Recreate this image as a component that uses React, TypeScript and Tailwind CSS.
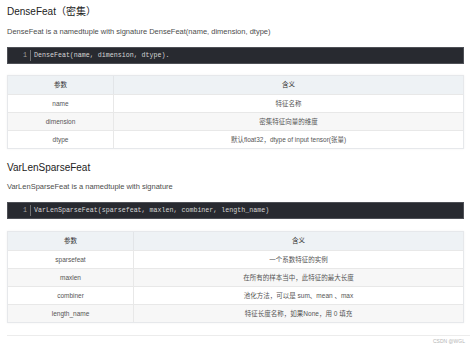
import React from 'react';

const sans = "font-['Liberation_Sans','Noto_Sans_CJK_SC',sans-serif]";
const mono = "font-['Liberation_Mono','DejaVu_Sans_Mono',monospace]";

type Row = [string, string];

const denseRows: Row[] = [
  ["name", "特征名称"],
  ["dimension", "密集特征向量的维度"],
  ["dtype", "默认float32，dtype of input tensor(张量)"],
];

const varLenRows: Row[] = [
  ["sparsefeat", "一个系数特征的实例"],
  ["maxlen", "在所有的样本当中，此特征的最大长度"],
  ["combiner", "池化方法，可以是 sum、mean 、max"],
  ["length_name", "特征长度名称，如果None，用 0 填充"],
];

function CodeLine({ code }: { code: string }) {
  return (
    <div className={`${mono} h-[17px] flex items-center bg-[#282a30] border border-[#4e5056] text-[6.65px]`}>
      <span className="text-neutral-400 w-[22px] text-right pr-[3px]">1</span>
      <span className="w-px h-[11px] bg-neutral-500" />
      <span className="text-neutral-300 pl-[3px] whitespace-pre">{code}</span>
    </div>
  );
}

function ParamTable({ rows, firstCol }: { rows: Row[]; firstCol: string }) {
  return (
    <div className="border border-[#e6e8eb] shadow-[0_0_2px_rgba(0,0,0,0.06)]">
      <div className="flex h-[18px] bg-[#eef2f5] text-[#333] text-[6.5px]">
        <div className={`${firstCol} flex items-center justify-center border-r border-[#e2e5e8]`}>参数</div>
        <div className="flex-1 flex items-center justify-center">含义</div>
      </div>
      {rows.map(([k, v], i) => (
        <div
          key={k}
          className={`flex h-[18px] text-[#555] text-[6.5px] border-t border-[#e8e8e8] ${i % 2 === 1 ? 'bg-[#f7f7f7]' : 'bg-white'}`}
        >
          <div className={`${firstCol} flex items-center justify-center border-r border-[#e8e8e8]`}>{k}</div>
          <div className="flex-1 flex items-center justify-center">{v}</div>
        </div>
      ))}
    </div>
  );
}

export default function App() {
  return (
    <div className={`${sans} w-[474px] h-[344px] bg-white overflow-hidden px-[7px] pt-[4px]`}>
      <h1 className="text-[10px] leading-[16px] text-[#222]">DenseFeat（密集）</h1>
      <p className="mt-[6px] text-[7.5px] leading-[12px] text-[#4d4d4d]">
        DenseFeat is a namedtuple with signature DenseFeat(name, dimension, dtype)
      </p>
      <div className="mt-[9px] w-[457px]">
        <CodeLine code="DenseFeat(name, dimension, dtype)." />
      </div>
      <div className="mt-[11px] w-[457px]">
        <ParamTable rows={denseRows} firstCol="w-[106px]" />
      </div>

      <h2 className="mt-[11px] text-[10px] leading-[16px] text-[#222]">VarLenSparseFeat</h2>
      <p className="mt-[5px] text-[7.5px] leading-[12px] text-[#4d4d4d]">
        VarLenSparseFeat is a namedtuple with signature
      </p>
      <div className="mt-[9px] w-[457px]">
        <CodeLine code="VarLenSparseFeat(sparsefeat, maxlen, combiner, length_name)" />
      </div>
      <div className="mt-[12px] w-[457px]">
        <ParamTable rows={varLenRows} firstCol="w-[126px]" />
      </div>

      <div className="mt-[12px] h-px bg-[#ececec] w-[463px]" />
      <div className="flex justify-end pr-[2px] pt-[2px]">
        <span className="text-[5px] leading-[6px] text-[#b5b5b5]">CSDN @WGL</span>
      </div>
    </div>
  );
}
